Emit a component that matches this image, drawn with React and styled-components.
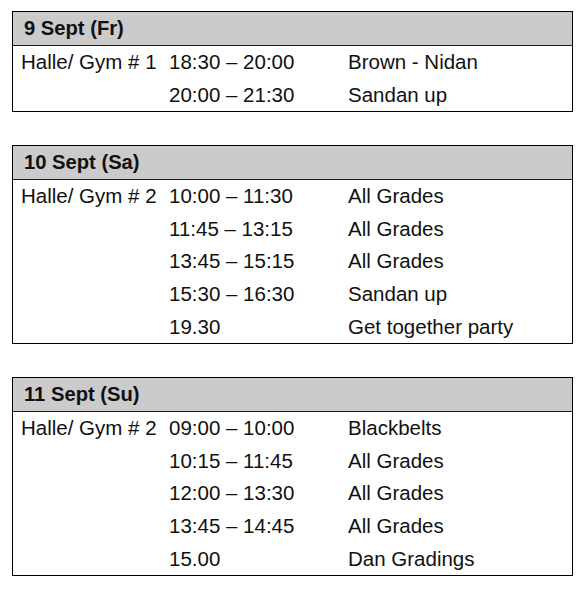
import React from 'react'
import styled, { createGlobalStyle } from 'styled-components'

const GlobalStyle = createGlobalStyle`
    html, body {
        margin: 0;
        padding: 0;
        background: #ffffff;
    }
    body {
        font-family: "Liberation Sans", Arial, sans-serif;
        color: #111111;
    }
`

const Page = styled.div`
    width: 582px;
    min-height: 589px;
    box-sizing: border-box;
    padding: 11px 0 0 12px;
    display: flex;
    flex-direction: column;
    gap: 33px;
`

const DayTable = styled.section`
    width: 561px;
    box-sizing: border-box;
    border: 1px solid #000000;
`

const DayHeader = styled.div`
    height: 34px;
    box-sizing: border-box;
    background-color: #cbcbcb;
    border-bottom: 1px solid #1a1a1a;
    display: flex;
    align-items: center;
    padding: 0 11px;
    font-size: 20.2px;
    font-weight: 700;
`

const Row = styled.div`
    height: 32.6px;
    display: grid;
    grid-template-columns: 148px 179px 1fr;
    align-items: center;
    padding-left: 8px;
    font-size: 20.5px;
    line-height: 1;
`

const Cell = styled.span`
    white-space: nowrap;
`

const schedule = [
    {
        day: '9 Sept (Fr)',
        hall: 'Halle/ Gym # 1',
        slots: [
            ['18:30 – 20:00', 'Brown - Nidan'],
            ['20:00 – 21:30', 'Sandan up'],
        ],
    },
    {
        day: '10 Sept (Sa)',
        hall: 'Halle/ Gym # 2',
        slots: [
            ['10:00 – 11:30', 'All Grades'],
            ['11:45 – 13:15', 'All Grades'],
            ['13:45 – 15:15', 'All Grades'],
            ['15:30 – 16:30', 'Sandan up'],
            ['19.30', 'Get together party'],
        ],
    },
    {
        day: '11 Sept (Su)',
        hall: 'Halle/ Gym # 2',
        slots: [
            ['09:00 – 10:00', 'Blackbelts'],
            ['10:15 – 11:45', 'All Grades'],
            ['12:00 – 13:30', 'All Grades'],
            ['13:45 – 14:45', 'All Grades'],
            ['15.00', 'Dan Gradings'],
        ],
    },
]

export default function App() {
    return (
        <>
            <GlobalStyle />
            <Page>
                {schedule.map((d) => (
                    <DayTable key={d.day}>
                        <DayHeader>{d.day}</DayHeader>
                        {d.slots.map(([time, what], i) => (
                            <Row key={time}>
                                <Cell>{i === 0 ? d.hall : ''}</Cell>
                                <Cell>{time}</Cell>
                                <Cell>{what}</Cell>
                            </Row>
                        ))}
                    </DayTable>
                ))}
            </Page>
        </>
    )
}
